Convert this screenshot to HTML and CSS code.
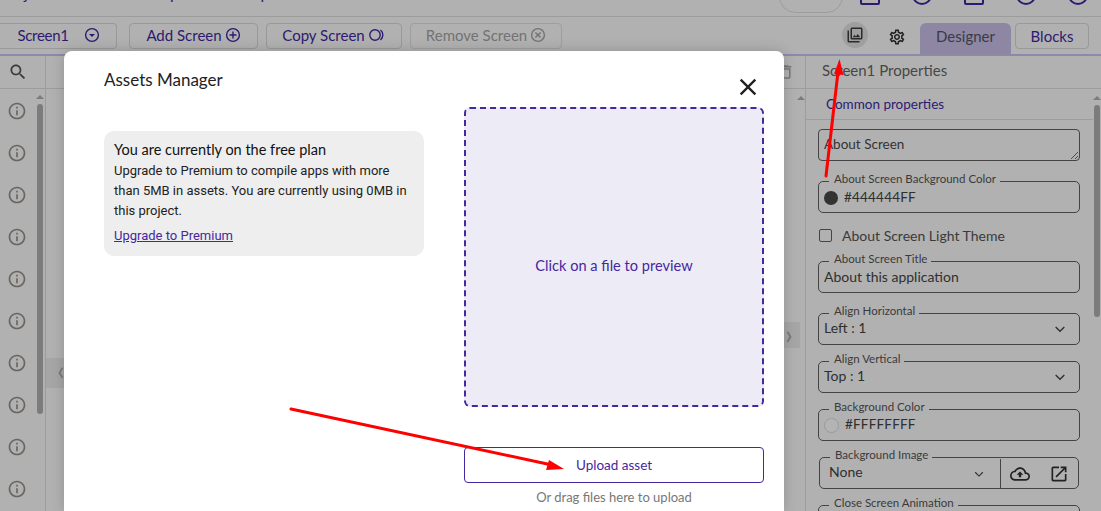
FILE: index.html
```html
<!DOCTYPE html>
<html lang="en">
<head>
<meta charset="utf-8">
<title>Assets Manager</title>
<link rel="stylesheet" href="styles.css">
</head>
<body>
<svg class="defs" width="0" height="0" aria-hidden="true">
  <symbol id="i-info" viewBox="0 0 24 24"><path d="M11 7h2v2h-2zm0 4h2v6h-2zm1-9C6.48 2 2 6.48 2 12s4.48 10 10 10 10-4.48 10-10S17.52 2 12 2zm0 18c-4.41 0-8-3.59-8-8s3.59-8 8-8 8 3.59 8 8-3.59 8-8 8z"/></symbol>
  <symbol id="i-chev" viewBox="0 0 24 24"><path d="M5.500 9 12 15.500 18.500 9"/></symbol>
</svg>
<div class="app">
  <header class="topbar">
    <div class="topnav"><span>Projects</span><span>Connect</span><span>Help</span><span class="shop">Shop</span></div>
    <div class="pill"></div>
    <div class="topicons">
      <span class="topicon"></span><span class="topicon round"></span><span class="topicon"></span><span class="topicon round"></span><span class="topicon round"></span>
    </div>
  </header>
  <div class="toolbar">
    <button class="tbtn first">Screen1
      <svg class="ci" viewBox="0 0 16 16"><circle cx="8" cy="8" r="6.4"/><path class="fill" d="M5 7h6l-3 3z"/></svg>
    </button>
    <button class="tbtn">Add Screen
      <svg class="ci" viewBox="0 0 16 16"><circle cx="8" cy="8" r="6.4"/><path d="M8 4.5v7M4.5 8h7"/></svg>
    </button>
    <button class="tbtn">Copy Screen
      <svg class="ci wide" viewBox="0 0 18 16"><circle cx="7" cy="8" r="5.2"/><path d="M12.500 3a6.500 6.500 0 0 1 0 10"/></svg>
    </button>
    <button class="tbtn off">Remove Screen
      <svg class="ci" viewBox="0 0 16 16"><circle cx="8" cy="8" r="6.4"/><path d="m5.4 5.4 5.2 5.2M10.6 5.4l-5.2 5.2"/></svg>
    </button>
    <div class="spacer"></div>
    <div class="gallery"><svg viewBox="0 0 24 24"><path d="M20 4v12H8V4h12m0-2H8c-1.100 0-2 .9-2 2v12c0 1.100.9 2 2 2h12c1.100 0 2-.9 2-2V4c0-1.100-.9-2-2-2zm-8.500 9.670 1.690 2.260 2.480-3.100L19 15H9zM2 6v14c0 1.100.9 2 2 2h14v-2H4V6H2z"/></svg></div>
    <div class="gear"><svg viewBox="0 0 24 24"><path d="M19.430 12.980c.04-.32.07-.64.07-.98 0-.34-.03-.66-.07-.98l2.110-1.650c.19-.15.24-.42.12-.64l-2-3.460c-.09-.16-.26-.25-.44-.25-.06 0-.12.01-.17.03l-2.490 1c-.52-.4-1.080-.73-1.690-.98l-.38-2.650C14.460 2.180 14.250 2 14 2h-4c-.25 0-.46.18-.49.42l-.38 2.650c-.61.25-1.170.59-1.690.98l-2.490-1c-.06-.02-.12-.03-.18-.03-.17 0-.34.09-.43.25l-2 3.460c-.13.22-.07.49.12.64l2.110 1.650c-.04.32-.07.65-.07.98 0 .33.03.66.07.98l-2.110 1.650c-.19.15-.24.42-.12.64l2 3.460c.09.16.26.25.44.25.06 0 .12-.01.17-.03l2.490-1c.52.4 1.080.73 1.690.98l.38 2.650c.03.24.24.42.49.42h4c.25 0 .46-.18.49-.42l.38-2.650c.61-.25 1.170-.59 1.690-.98l2.490 1c.06.02.12.03.18.03.17 0 .34-.09.43-.25l2-3.460c.12-.22.07-.49-.12-.64l-2.110-1.650zm-1.980-1.710c.04.31.05.52.05.73 0 .21-.02.43-.05.73l-.14 1.130.89.7 1.080.84-.7 1.210-1.270-.51-1.040-.42-.9.68c-.43.32-.84.56-1.250.73l-1.060.43-.16 1.130-.2 1.350h-1.400l-.19-1.350-.16-1.130-1.060-.43c-.43-.18-.83-.41-1.230-.71l-.91-.7-1.060.43-1.270.51-.7-1.210 1.080-.84.89-.7-.14-1.130c-.03-.31-.05-.54-.05-.74s.02-.43.05-.73l.14-1.130-.89-.7-1.080-.84.7-1.210 1.270.51 1.040.42.9-.68c.43-.32.84-.56 1.250-.73l1.060-.43.16-1.130.2-1.350h1.390l.19 1.350.16 1.130 1.060.43c.43.18.83.41 1.230.71l.91.7 1.060-.43 1.270-.51.7 1.210-1.070.85-.89.7.14 1.130zM12 8c-2.210 0-4 1.790-4 4s1.790 4 4 4 4-1.790 4-4-1.790-4-4-4zm0 6c-1.100 0-2-.9-2-2s.9-2 2-2 2 .9 2 2-.9 2-2 2z"/></svg></div>
    <div class="tab active">Designer</div>
    <div class="tab">Blocks</div>
  </div>
  <main class="main">
    <aside class="left">
      <div class="left-head"><svg viewBox="0 0 24 24"><path d="M15.500 14h-.79l-.28-.27C15.410 12.590 16 11.110 16 9.500 16 5.910 13.090 3 9.500 3S3 5.910 3 9.500 5.910 16 9.500 16c1.610 0 3.090-.59 4.230-1.570l.27.28v.79l5 4.990L20.490 19l-4.990-5zm-6 0C7.010 14 5 11.990 5 9.500S7.010 5 9.500 5 14 7.010 14 9.500 11.990 14 9.500 14z"/></svg></div>
      <div class="left-body">
        <div class="infos">
          <svg><use href="#i-info"/></svg><svg><use href="#i-info"/></svg><svg><use href="#i-info"/></svg><svg><use href="#i-info"/></svg><svg><use href="#i-info"/></svg><svg><use href="#i-info"/></svg><svg><use href="#i-info"/></svg><svg><use href="#i-info"/></svg><svg><use href="#i-info"/></svg><svg><use href="#i-info"/></svg>
        </div>
        <div class="sb sb-left"><i class="arrow"></i><b class="thumb"></b></div>
      </div>
    </aside>
    <section class="center">
      <div class="center-head">
        <svg class="trash" viewBox="0 0 24 24"><path d="M6 19c0 1.100.9 2 2 2h8c1.100 0 2-.9 2-2V7H6v12zM8 9h8v10H8V9zm7.500-5-1-1h-5l-1 1H5v2h14V4z"/></svg>
      </div>
      <div class="center-arrow"><i class="arrow"></i></div>
      <div class="nudge nudge-l">‹</div>
      <div class="nudge nudge-r">›</div>
    </section>
    <aside class="right">
      <div class="right-head">Screen1 Properties</div>
      <div class="right-wrap">
        <div class="right-body">
          <div class="section-title">Common properties</div>
          <div class="props">
            <div class="textarea">About Screen
              <svg class="grip" viewBox="0 0 8 8"><path d="M1 8l7-7M5 8l3-3"/></svg>
            </div>
            <fieldset class="field"><legend>About Screen Background Color</legend>
              <div class="row"><span class="swatch dark"></span><span class="val">#444444FF</span></div>
            </fieldset>
            <label class="check"><span class="box"></span>About Screen Light Theme</label>
            <fieldset class="field"><legend>About Screen Title</legend><div class="row title">About this application</div></fieldset>
            <fieldset class="field after-title"><legend>Align Horizontal</legend><div class="row between">Left : 1<svg class="chev"><use href="#i-chev"/></svg></div></fieldset>
            <fieldset class="field"><legend>Align Vertical</legend><div class="row between">Top : 1<svg class="chev"><use href="#i-chev"/></svg></div></fieldset>
            <fieldset class="field"><legend>Background Color</legend>
              <div class="row up"><span class="swatch light"></span><span class="val">#FFFFFFFF</span></div>
            </fieldset>
            <fieldset class="field image"><legend>Background Image</legend>
              <div class="row split">
                <div class="select"><span class="none">None</span><svg class="chev small"><use href="#i-chev"/></svg></div>
                <div class="actions">
                  <svg viewBox="0 0 24 24"><path d="M19.350 10.040C18.670 6.590 15.640 4 12 4 9.110 4 6.600 5.640 5.350 8.040 2.340 8.360 0 10.910 0 14c0 3.310 2.690 6 6 6h13c2.760 0 5-2.240 5-5 0-2.640-2.050-4.780-4.650-4.960zM19 18H6c-2.210 0-4-1.790-4-4 0-2.050 1.530-3.760 3.560-3.970l1.070-.11.5-.95C8.080 7.140 9.940 6 12 6c2.620 0 4.880 1.860 5.390 4.430l.3 1.500 1.530.11c1.560.1 2.780 1.410 2.780 2.960 0 1.650-1.350 3-3 3zM8 13h2.550v3h2.900v-3H16l-4-4z"/></svg>
                  <svg viewBox="0 0 24 24"><path d="M19 19H5V5h7V3H5c-1.110 0-2 .9-2 2v14c0 1.100.89 2 2 2h14c1.100 0 2-.9 2-2v-7h-2v7zM14 3v2h3.590l-9.830 9.830 1.410 1.410L19 6.410V10h2V3h-7z"/></svg>
                </div>
              </div>
            </fieldset>
            <fieldset class="field"><legend>Close Screen Animation</legend><div class="row"></div></fieldset>
          </div>
        </div>
        <div class="sb sb-right"><i class="arrow"></i><b class="thumb"></b></div>
      </div>
    </aside>
  </main>
</div>

<div class="modal">
  <h2 class="modal-title">Assets Manager</h2>
  <svg class="close" viewBox="0 0 24 24"><path d="M19 6.410 17.590 5 12 10.590 6.410 5 5 6.410 10.590 12 5 17.590 6.410 19 12 13.410 17.590 19 19 17.590 13.410 12z"/></svg>
  <div class="modal-body">
    <div class="notice">
      <h3>You are currently on the free plan</h3>
      <p>Upgrade to Premium to compile apps with more than 5MB in assets. You are currently using 0MB in this project.</p>
      <a href="#">Upgrade to Premium</a>
    </div>
    <div class="uploader">
      <div class="preview">Click on a file to preview</div>
      <button class="upload">Upload asset</button>
      <div class="hint">Or drag files here to upload</div>
    </div>
  </div>
</div>

<svg class="annot" viewBox="0 0 1101 511" aria-hidden="true">
  <path class="shaft" d="M826 176 838 72"/>
  <path class="head" d="M839.500 59 843.500 75 834 74z"/>
  <path class="shaft" d="M291 409 552 465"/>
  <path class="head" d="M564 469 546 470 549 460z"/>
</svg>
</body>
</html>
```
FILE: styles.css
```css
* { box-sizing: border-box; }
html, body { margin: 0; height: 511px; overflow: hidden; }
body {
  position: relative;
  background: #b1b1b1;
  font-family: Lato, "Noto Sans", sans-serif;
  color: #2f2f2f;
}
.defs { position: absolute; }
.app { height: 511px; display: flex; flex-direction: column; overflow: hidden; }

.topbar {
  height: 17px;
  flex: none;
  display: flex;
  border-bottom: 1px solid #9c9c9c;
  overflow: hidden;
  position: relative;
}
.topnav {
  display: flex;
  gap: 15px;
  margin: -16px 0 0;
  font-size: 16px;
  line-height: 17px;
  height: 17px;
  color: #2d1a70;
}
.shop { margin-left: 40px; }
.pill {
  position: absolute;
  left: 779px;
  top: -20px;
  width: 64px;
  height: 33px;
  border: 1px solid #9c9c9c;
  border-radius: 17px;
}
.topicons {
  position: absolute;
  left: 860px;
  top: -15px;
  display: flex;
  gap: 32px;
}
.topicon {
  width: 20px;
  height: 20px;
  border: 2.500px solid #2d1a70;
  border-radius: 2px;
}
.topicon.round { border-radius: 50%; }

.toolbar {
  height: 39px;
  flex: none;
  display: flex;
  align-items: flex-start;
  gap: 8px;
  padding-top: 6px;
  border-bottom: 2px solid #8f88ac;
}
.tbtn {
  height: 26px;
  padding: 0 0 2px;
  display: flex;
  align-items: center;
  justify-content: center;
  gap: 3px;
  border: 1px solid #999;
  border-radius: 4px;
  background: transparent;
  font: 15px/22px Lato, "Noto Sans", sans-serif;
  color: #2d1a70;
  width: 129px;
  margin-left: 4px;
}
.tbtn + .tbtn { margin-left: 0; }
.tbtn.first {
  width: 117px;
  margin: 0 4px 0 0;
  border-left: 0;
  border-radius: 0 4px 4px 0;
  gap: 15px;
  padding-left: 1px;
  letter-spacing: -0.300px;
}
.tbtn:nth-child(3) { width: 136px; }
.tbtn.off { width: 152px; color: #737373; border-color: #9e9e9e; }
.ci { width: 16px; height: 16px; fill: none; stroke: currentColor; stroke-width: 1.400; }
.ci.wide { width: 18px; }
.ci .fill { fill: currentColor; stroke: none; }
.spacer { flex: 1; }
.gallery {
  width: 26px;
  height: 26px;
  margin-top: -1px;
  border-radius: 50%;
  background: #9f9f9f;
  display: flex;
  align-items: center;
  justify-content: center;
}
.gallery svg { width: 18px; height: 18px; fill: #2b2b2b; }
.gear { width: 18px; height: 18px; margin: 5px 6px 0 12px; }
.gear svg { width: 18px; height: 18px; fill: #222; display: block; }
.tab {
  width: 74px;
  height: 26px;
  display: flex;
  align-items: center;
  justify-content: center;
  border: 1px solid #999;
  border-radius: 4px;
  font-size: 15px;
  color: #2d1a70;
  margin-right: 12px;
}
.tab.active {
  width: 91px;
  height: 32px;
  margin: 0 -4px 0 0;
  padding-bottom: 6px;
  border: 0;
  border-radius: 6px 6px 0 0;
  background: #8d87a3;
  color: #3b3a45;
}

.main { flex: 1; min-height: 0; display: flex; }
.left { width: 46px; flex: none; border-right: 1px solid #9c9c9c; display: flex; flex-direction: column; }
.left-head {
  height: 33px;
  flex: none;
  border-bottom: 1px solid #9c9c9c;
  display: flex;
  align-items: center;
  padding-left: 8px;
}
.left-head svg { width: 20px; height: 20px; fill: #3a3a3a; }
.left-body { flex: 1; min-height: 0; display: flex; overflow: hidden; }
.infos { width: 36px; flex: none; padding: 12px 0 0 7px; display: flex; flex-direction: column; gap: 22px; }
.infos svg { width: 20px; height: 20px; flex: none; fill: #6a6560; }
.sb { width: 8px; flex: none; display: flex; flex-direction: column; align-items: center; }
.arrow {
  display: block;
  width: 0;
  height: 0;
  border: 4px solid transparent;
  border-top: 0;
  border-bottom: 4px solid #7c7c7c;
}
.thumb { display: block; width: 6px; background: #7c7c7c; border-radius: 3px; }
.sb-left { padding-top: 6px; }
.sb-left .thumb { height: 310px; margin-top: 5px; }

.center { flex: 1; min-width: 0; position: relative; }
.center-head {
  height: 33px;
  border-bottom: 1px solid #9c9c9c;
  display: flex;
  justify-content: flex-end;
  align-items: center;
  padding-right: 10px;
}
.trash { width: 18px; height: 18px; fill: #777; }
.center-arrow { display: flex; justify-content: flex-end; padding: 7px 0 0; }
.nudge {
  position: absolute;
  width: 19px;
  height: 30px;
  background: #a6a6a6;
  color: #777;
  font-size: 26px;
  line-height: 24px;
  text-align: center;
}
.nudge-l { left: 0; top: 302px; padding-left: 11px; }
.nudge-r { left: 738px; top: 266px; width: 16px; padding-right: 6px; height: 26px; }

.right { width: 296px; flex: none; border-left: 1px solid #9c9c9c; display: flex; flex-direction: column; }
.right-head {
  height: 33px;
  flex: none;
  padding-left: 16px;
  border-bottom: 1px solid #9c9c9c;
  font-size: 15px;
  line-height: 28px;
  color: #474747;
}
.right-wrap { flex: 1; min-height: 0; display: flex; }
.right-body { flex: 1; min-width: 0; overflow: hidden; }
.section-title {
  height: 31px;
  padding-left: 20px;
  border-bottom: 1px solid #9c9c9c;
  font-size: 13.500px;
  line-height: 30px;
  color: #2d1a70;
}
.props { width: 262px; margin: 9px 0 0 12px; display: flex; flex-direction: column; }
.sb-right { padding-top: 7px; }
.sb-right .thumb { height: 212px; margin-top: 5px; }

.textarea {
  position: relative;
  height: 32px;
  flex: none;
  padding: 6px 5px;
  border: 1px solid #444;
  border-radius: 4px;
  font-size: 13.500px;
  line-height: 16px;
  color: #333;
}
.grip {
  position: absolute;
  right: 1px;
  bottom: 1px;
  width: 8px;
  height: 8px;
  fill: none;
  stroke: #333;
  stroke-width: 0.800;
}
.field {
  margin: 8px 0 0;
  padding: 0 5px;
  min-width: 0;
  height: 40px;
  flex: none;
  border: 1px solid #444;
  border-radius: 5px;
}
.textarea + .field { margin-top: 12px; }
.check + .field { margin-top: 8px; }
.field.after-title { margin-top: 12px; }
legend {
  margin-left: 5px;
  padding: 0 4px 0 5px;
  height: 16px;
  font-size: 11.500px;
  line-height: 12px;
  color: #3a3a3a;
}
.row {
  height: 24px;
  display: flex;
  align-items: center;
  font-size: 14px;
  color: #2f2f2f;
  margin-top: -4px;
}
.row.title { margin-top: -5px; }
.row.up { margin-top: -5px; }
.between { justify-content: space-between; padding-right: 6px; margin-top: -6px; }
.swatch { width: 14px; height: 14px; margin: 2px 6px 0 0; border-radius: 50%; flex: none; }
.swatch.dark { background: #333; }
.swatch.light { width: 15px; height: 15px; border: 1px solid #9a9a9a; background: #b4b4b4; }
.val { font-size: 13.500px; letter-spacing: 0.200px; }
.chev { width: 16px; height: 16px; margin-top: 3px; fill: none; stroke: #2f2f2f; stroke-width: 2; }
.chev.small { width: 14px; height: 14px; margin-top: 0; }
.check {
  display: flex;
  align-items: center;
  height: 20px;
  flex: none;
  margin-top: 12px;
  font-size: 14px;
  color: #3a3a3a;
}
.box { width: 13px; height: 13px; margin: 0 10px 0 1px; border: 1px solid #444; border-radius: 2px; }
.field.image { margin-left: 1px; margin-right: 1px; padding: 0; }
.field.image legend { margin-left: 10px; }
.split { margin-top: -6px; height: 30px; }
.select {
  width: 181px;
  height: 100%;
  padding: 0 14px 0 9px;
  border-right: 1px solid #444;
  display: flex;
  align-items: center;
  justify-content: space-between;
}
.none { margin-top: -5px; }
.actions { flex: 1; display: flex; justify-content: space-between; padding: 0 9px; align-items: center; }
.actions svg { width: 20px; height: 20px; fill: #222; }

.modal {
  position: absolute;
  left: 64px;
  top: 51px;
  width: 720px;
  height: 460px;
  padding: 0 20px 0 40px;
  background: #fff;
  border-radius: 8px 8px 0 0;
  box-shadow: 0 0 14px rgba(0, 0, 0, 0.18);
  overflow: hidden;
}
.modal-title {
  margin: 0;
  height: 56px;
  padding-top: 16px;
  font-size: 17px;
  font-weight: 400;
  line-height: 26px;
  color: #222;
}
.close { position: absolute; right: 22px; top: 22px; width: 28px; height: 28px; fill: #222; }
.modal-body { display: grid; grid-template-columns: 320px 300px; gap: 40px; align-items: start; }
.notice {
  margin-top: 24px;
  height: 125px;
  padding: 9px 10px 0;
  border-radius: 10px;
  background: #eee;
  font-family: Roboto, sans-serif;
  font-size: 13px;
  line-height: 20px;
  color: #222;
}
.notice h3 {
  margin: 0;
  font: 400 14.500px/20px Lato, "Noto Sans", sans-serif;
  color: #111;
}
.notice p { margin: 1px 0 5px; }
.notice a { color: #4527a0; }
.preview {
  height: 300px;
  display: flex;
  align-items: center;
  justify-content: center;
  padding-top: 17px;
  border: 2px dashed #4527a0;
  border-radius: 6px;
  background: #edebf6;
  font-size: 14.600px;
  color: #4527a0;
}
.upload {
  display: block;
  width: 100%;
  height: 36px;
  margin-top: 40px;
  border: 1px solid #4527a0;
  border-radius: 4px;
  background: #fff;
  font: 13.500px Lato, "Noto Sans", sans-serif;
  color: #4527a0;
}
.hint { margin-top: 6px; text-align: center; font-size: 13px; line-height: 17px; color: #777; }

.annot { position: absolute; left: 0; top: 0; width: 1101px; height: 511px; pointer-events: none; }
.shaft { fill: none; stroke: #f00; stroke-width: 3; stroke-linecap: round; }
.head { fill: #f00; }
```
